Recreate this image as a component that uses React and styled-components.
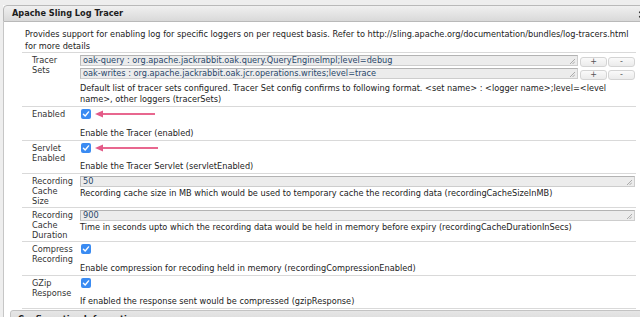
import React from 'react';
import styled, { createGlobalStyle } from 'styled-components';

const GlobalStyle = createGlobalStyle`
  html, body { margin: 0; padding: 0; overflow: hidden; background: #eeeeee; }
  body { font-family: "DejaVu Sans", Verdana, sans-serif; font-size: 8.2px; color: #222; }
  #root { width: 640px; height: 317px; overflow: hidden; }
`;

const Page = styled.div`
  width: 640px;
  height: 317px;
  box-sizing: border-box;
  padding: 5px 0 0 3px;
  background: #eeeeee;
  overflow: hidden;
`;

const Panel = styled.section`
  width: 650px;
  background: #fff;
`;

const Header = styled.header`
  position: relative;
  height: 15px;
  line-height: 15px;
  padding-left: 8px;
  border: 1px solid #b9b9b9;
  border-top-left-radius: 4px;
  background: linear-gradient(#f0f0f0, #d9d9d9);
  font-weight: bold;
  color: #1c1c1c;
`;

const Close = styled.svg`
  position: absolute;
  left: 634px;
  top: 4px;
`;

const Body = styled.div`
  border-left: 1px solid #c6c6c6;
  padding: 6px 0 0 6px;
  height: 300px;
  box-sizing: border-box;
`;

const Content = styled.div`
  margin-left: 12px;
  width: 614px;
`;

const Intro = styled.p`
  margin: 0;
  padding-left: 3px;
  line-height: 12px;
  white-space: nowrap;
  color: #222;
`;

const Table = styled.div`
  border-bottom: 1px solid #d9d9d9;
`;

const Row = styled.div`
  display: grid;
  grid-template-columns: 58px 1fr;
  border-top: 1px solid #d9d9d9;
`;

const Label = styled.div`
  padding: 2px 0 1px 10px;
  line-height: 10px;
  color: #333;
`;

const Value = styled.div`
  position: relative;
  padding: 2px 0 ${(p) => p.$bottom || 0}px 0;
`;

const InputLine = styled.div`
  display: flex;
  align-items: flex-start;
  margin-bottom: ${(p) => p.$gap || 0}px;
  padding-right: 1px;
`;

const Field = styled.div`
  position: relative;
  flex: 1;
  height: 11px;
  box-sizing: border-box;
  padding: 0 2px;
  line-height: 9px;
  border: 1px solid #cdcdcd;
  border-top-color: #b3b3b3;
  border-left-color: #bdbdbd;
  background: #ececec;
  color: #29476a;
  white-space: nowrap;
  overflow: hidden;
`;

const Grip = styled.svg`
  position: absolute;
  right: 2px;
  bottom: 1px;
`;

const SmallButton = styled.button`
  width: 27px;
  height: 10px;
  margin: 2px 0 0 ${(p) => p.$ml}px;
  padding: 0;
  border: 1px solid #d4d4d4;
  border-radius: 3px;
  background: linear-gradient(#fafafa, #ebebeb);
  color: #555;
  font-family: "DejaVu Sans", Verdana, sans-serif;
  font-size: 8px;
  line-height: 8px;
`;

const Desc = styled.div`
  margin-top: ${(p) => p.$mt}px;
  line-height: 11px;
  white-space: nowrap;
  color: #222;
`;

const Check = styled.svg`
  display: block;
  margin-left: 1px;
`;

const Arrow = styled.svg`
  position: absolute;
  left: 15px;
  top: 3px;
`;

const ConfigHeader = styled.header`
  margin-top: 1px;
  height: 17px;
  line-height: 17px;
  padding-left: 7px;
  border: 1px solid #c3c3c3;
  border-top-left-radius: 3px;
  background: linear-gradient(#e6e6e6, #d3d3d3);
  font-weight: bold;
  color: #1c1c1c;
`;

const CheckBox = () => (
  <Check width="10" height="10" viewBox="0 0 10 10">
    <rect x="0" y="0" width="10" height="10" rx="2" fill="#3a8bf2" />
    <path d="M2.4 5.2 L4.2 7 L7.6 2.9" fill="none" stroke="#fff" strokeWidth="1.4" strokeLinecap="round" strokeLinejoin="round" />
  </Check>
);

const PinkArrow = ({ length }) => (
  <Arrow width={length} height="8" viewBox={`0 0 ${length} 8`}>
    <line x1="6" y1="4" x2={length} y2="4" stroke="#e8678f" strokeWidth="2" />
    <polygon points="0,4 8,0.6 8,7.4" fill="#e35a88" />
  </Arrow>
);

const ResizeGrip = () => (
  <Grip width="6" height="6" viewBox="0 0 6 6">
    <line x1="1" y1="6" x2="6" y2="1" stroke="#9a9a9a" strokeWidth="0.8" />
    <line x1="3.5" y1="6" x2="6" y2="3.5" stroke="#9a9a9a" strokeWidth="0.8" />
  </Grip>
);

const tracerSets = [
  'oak-query : org.apache.jackrabbit.oak.query.QueryEngineImpl;level=debug',
  'oak-writes : org.apache.jackrabbit.oak.jcr.operations.writes;level=trace',
];

const rows = [
  { kind: 'check', label: ['Enabled'], desc: 'Enable the Tracer (enabled)', arrow: 60 },
  { kind: 'check', label: ['Servlet', 'Enabled'], desc: 'Enable the Tracer Servlet (servletEnabled)', arrow: 63 },
  {
    kind: 'text',
    label: ['Recording', 'Cache', 'Size'],
    value: '50',
    desc: 'Recording cache size in MB which would be used to temporary cache the recording data (recordingCacheSizeInMB)',
  },
  {
    kind: 'text',
    label: ['Recording', 'Cache', 'Duration'],
    value: '900',
    desc: 'Time in seconds upto which the recording data would be held in memory before expiry (recordingCacheDurationInSecs)',
  },
  { kind: 'check', label: ['Compress', 'Recording'], desc: 'Enable compression for recoding held in memory (recordingCompressionEnabled)' },
  { kind: 'check', label: ['GZip', 'Response'], desc: 'If enabled the response sent would be compressed (gzipResponse)' },
];

const LabelLines = ({ lines }) => (
  <Label>
    {lines.map((l, i) => (
      <div key={i}>{l}</div>
    ))}
  </Label>
);

export default function App() {
  return (
    <>
      <GlobalStyle />
      <Page>
        <Panel>
          <Header>
            Apache Sling Log Tracer
            <Close width="9" height="9" viewBox="0 0 9 9">
              <path d="M1.5 1.5 L7.5 7.5 M7.5 1.5 L1.5 7.5" stroke="#1e1e1e" strokeWidth="2" />
            </Close>
          </Header>
          <Body>
            <Content>
              <Intro>
                Provides support for enabling log for specific loggers on per request basis. Refer to
                http://sling.apache.org/documentation/bundles/log-tracers.html
                <br />
                for more details
              </Intro>
              <Table>
                <Row>
                  <LabelLines lines={['Tracer', 'Sets']} />
                  <Value $bottom={1}>
                    {tracerSets.map((t, i) => (
                      <InputLine key={i} $gap={i === 0 ? 1 : 0}>
                        <Field>
                          {t}
                          <ResizeGrip />
                        </Field>
                        <SmallButton $ml={2}>+</SmallButton>
                        <SmallButton $ml={1}>-</SmallButton>
                      </InputLine>
                    ))}
                    <Desc $mt={3}>
                      Default list of tracer sets configured. Tracer Set config confirms to following format. &lt;set
                      name&gt; : &lt;logger name&gt;;level=&lt;level
                      <br />
                      name&gt;, other loggers (tracerSets)
                    </Desc>
                  </Value>
                </Row>
                {rows.map((r, i) => (
                  <Row key={i}>
                    <LabelLines lines={r.label} />
                    {r.kind === 'check' ? (
                      <Value $bottom={1}>
                        <CheckBox />
                        {r.arrow && <PinkArrow length={r.arrow} />}
                        <Desc $mt={8.5}>{r.desc}</Desc>
                      </Value>
                    ) : (
                      <Value>
                        <InputLine>
                          <Field>
                            {r.value}
                            <ResizeGrip />
                          </Field>
                        </InputLine>
                        <Desc $mt={1}>{r.desc}</Desc>
                      </Value>
                    )}
                  </Row>
                ))}
              </Table>
            </Content>
            <ConfigHeader>Configuration Information</ConfigHeader>
          </Body>
        </Panel>
      </Page>
    </>
  );
}
